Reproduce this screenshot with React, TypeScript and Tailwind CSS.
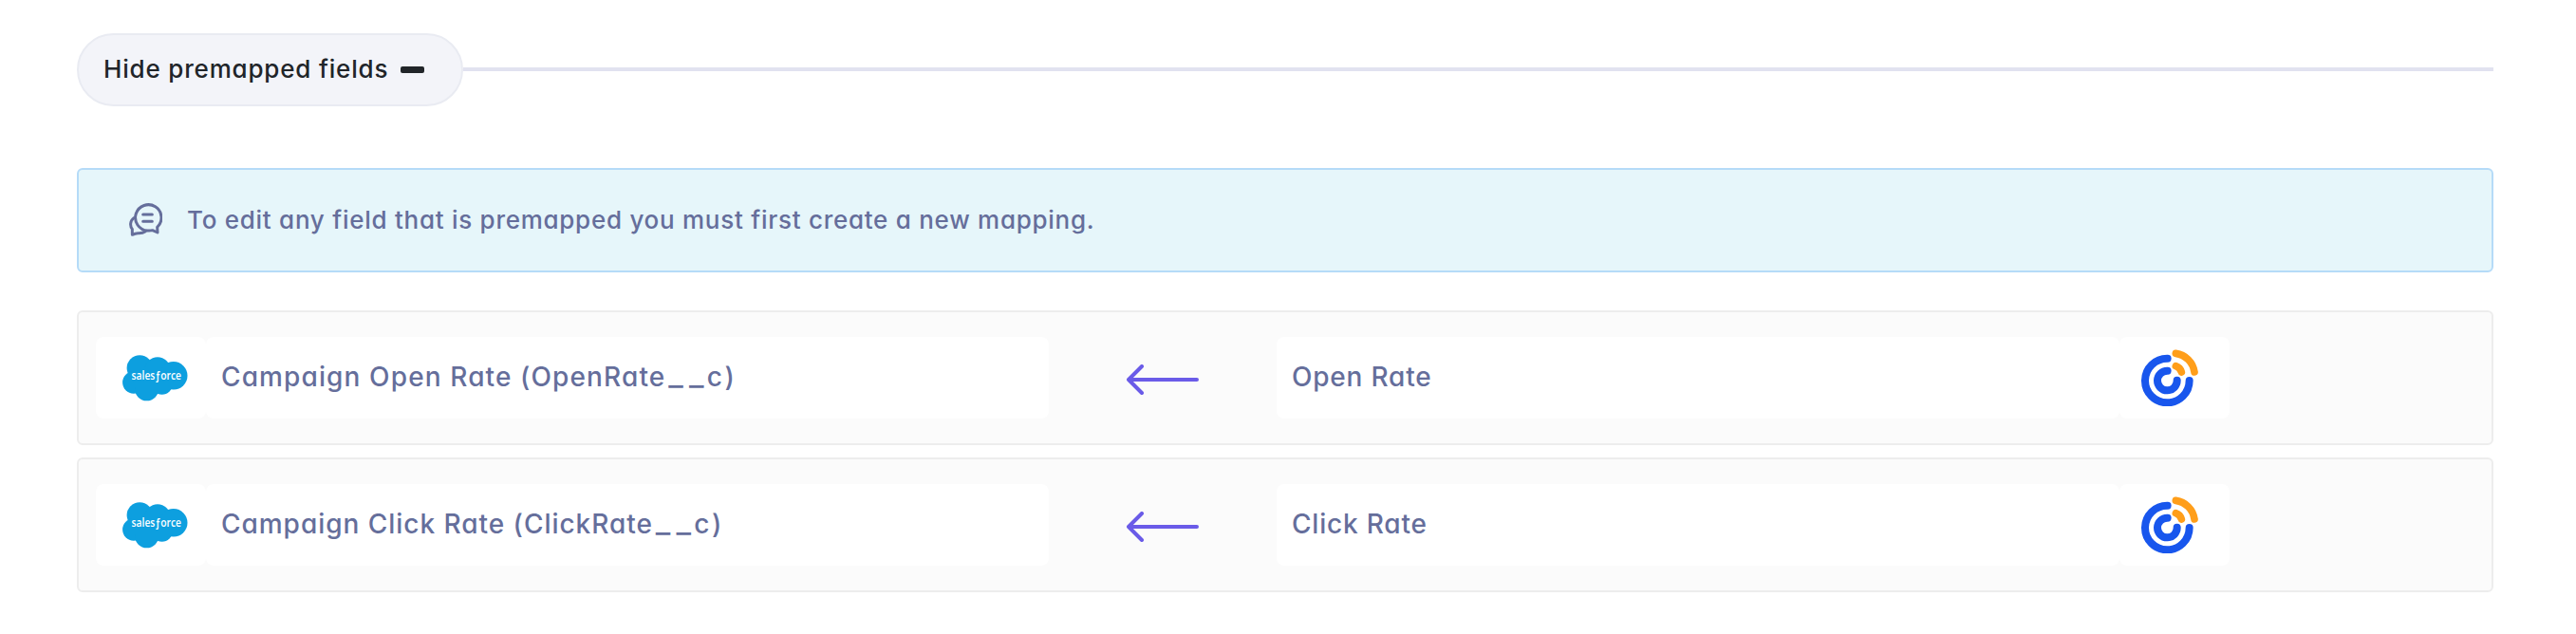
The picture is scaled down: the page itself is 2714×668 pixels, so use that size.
import React from "react";
import clsx from "clsx";

type Mapping = {
  id: string;
  source: string;
  suffix: string;
  target: string;
  sourceTracking: string;
};

const mappings: Mapping[] = [
  {
    id: "open",
    source: "Campaign Open Rate (OpenRate",
    suffix: "c)",
    target: "Open Rate",
    sourceTracking: "tracking-[1.12px]",
  },
  {
    id: "click",
    source: "Campaign Click Rate (ClickRate",
    suffix: "c)",
    target: "Click Rate",
    sourceTracking: "tracking-[0.97px]",
  },
];

function MessageIcon() {
  return (
    <svg
      className="mb-[2px] h-[35px] w-[35px] shrink-0"
      viewBox="0 0 105 105"
      fill="none"
      stroke="currentColor"
      strokeWidth="9"
      strokeLinecap="round"
      strokeLinejoin="round"
    >
      <path d="M90 93L89 76A41 41 0 1 0 58 87Q66 88 74 86Z" />
      <path d="M15 47C3 56 2 72 10 82L10 100Q20 95 28 95Q42 96 52 89" />
      <path d="M44 36H73M44 58H73" />
    </svg>
  );
}

function SalesforceLogo() {
  return (
    <svg className="h-[49px] w-[69px] overflow-visible" viewBox="0 0 69 49">
      <g fill="#0d9fdf">
        <circle cx="18.2" cy="13.8" r="13.6" />
        <circle cx="37" cy="15.5" r="13.3" />
        <circle cx="53.8" cy="21.8" r="14.7" />
        <circle cx="11.8" cy="29" r="11.7" />
        <circle cx="25.6" cy="35.8" r="12.5" />
        <circle cx="41.6" cy="30.6" r="11.2" />
        <rect x="12" y="14" width="42" height="20" />
        <rect x="14" y="30" width="30" height="10" />
      </g>
      <text
        x="9.6"
        y="26.4"
        fill="#fff"
        fontSize="12.5"
        fontFamily="Open Sans, sans-serif"
        fontWeight="600"
        textLength="52.4"
        lengthAdjust="spacingAndGlyphs"
      >
        salesƒorce
      </text>
    </svg>
  );
}

function ConstantContactLogo() {
  return (
    <svg className="h-[60px] w-[60px]" viewBox="0 0 180 180" fill="none" strokeLinecap="round">
      <g stroke="#1856ed" strokeWidth="24">
        <path d="M83 29A70 70 0 1 0 152 99" />
        <path d="M83 68A31 31 0 1 0 113 98" />
      </g>
      <g stroke="#ff9e1a" strokeWidth="23">
        <path d="M109 13A69 69 0 0 1 168 72" />
        <path d="M109 53A28 28 0 0 1 127 72" />
      </g>
    </svg>
  );
}

function ArrowLeft() {
  return (
    <svg
      className="h-[32px] w-[76px]"
      viewBox="0 0 76 32"
      fill="none"
      stroke="#6a5be8"
      strokeWidth="4"
      strokeLinecap="round"
      strokeLinejoin="round"
    >
      <path d="M16 2L2 16L16 30M2 16H74" />
    </svg>
  );
}

function MappingRow({ mapping }: { mapping: Mapping }) {
  return (
    <div className="flex h-[142px] items-center rounded-md border-2 border-[#ededed] bg-[#fbfbfb] pl-[18px] text-[28px] font-medium text-[#656e9b]">
      <div className="flex h-[86px] w-[116px] items-center rounded-lg bg-white pl-7">
        <SalesforceLogo />
      </div>
      <div className="flex h-[86px] w-[888px] items-center rounded-lg bg-white pb-[2px] pl-4 whitespace-nowrap">
        <span className={clsx(mapping.sourceTracking)}>
          {mapping.source}
          <span className="mr-[-3px] ml-[3px] align-[1px] text-[34px] leading-none font-normal tracking-[6.2px]">
            __
          </span>
          <span className="tracking-[3px]">{mapping.suffix}</span>
        </span>
      </div>
      <div className="flex w-60 justify-center pt-1">
        <ArrowLeft />
      </div>
      <div className="flex h-[86px] w-[888px] items-center rounded-lg bg-white pb-[2px] pl-4 tracking-[0.8px] whitespace-nowrap">
        {mapping.target}
      </div>
      <div className="flex h-[86px] w-[116px] items-center rounded-lg bg-white pl-[23px]">
        <ConstantContactLogo />
      </div>
    </div>
  );
}

export default function App() {
  return (
    <main className="min-h-[668px] bg-white pt-[35px] pr-[87px] pl-[81px] font-['Inter',sans-serif] [font-feature-settings:'cv11']">
      <div className="flex items-center">
        <button className="flex h-[77px] w-[407px] items-center rounded-full border-2 border-[#e9ebf2] bg-[#f3f4f9] pl-[26px] text-[26px] font-medium whitespace-nowrap text-[#212529]">
          <span className="w-[313px] pb-[2px] text-left tracking-[0.82px]">Hide premapped fields</span>
          <span className="h-[7px] w-[25px] rounded-xs bg-[#212529]" />
        </button>
        <div className="mb-px h-1 grow bg-[#e1e2f0]" />
      </div>

      <div className="mt-[65px] flex h-[110px] items-center rounded-md border-2 border-[#b5dbf8] bg-[#e6f6fa] pl-[53px] text-[26px] font-medium text-[#656e9b]">
        <MessageIcon />
        <p className="ml-[26px] pb-[2px] tracking-[0.73px]">
          To edit any field that is premapped you must first create a new mapping.
        </p>
      </div>

      <div className="mt-10 flex flex-col gap-[13px]">
        {mappings.map((m) => (
          <MappingRow key={m.id} mapping={m} />
        ))}
      </div>
    </main>
  );
}
